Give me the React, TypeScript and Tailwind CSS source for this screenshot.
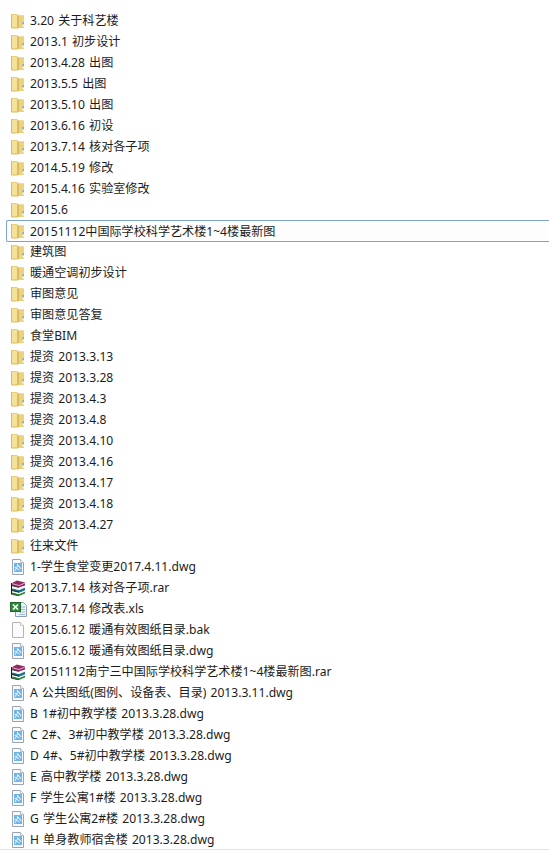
const rows: [string, string][] = [
  ['folder', '3.20 关于科艺楼'],
  ['folder', '2013.1 初步设计'],
  ['folder', '2013.4.28 出图'],
  ['folder', '2013.5.5 出图'],
  ['folder', '2013.5.10 出图'],
  ['folder', '2013.6.16 初设'],
  ['folder', '2013.7.14 核对各子项'],
  ['folder', '2014.5.19 修改'],
  ['folder', '2015.4.16 实验室修改'],
  ['folder', '2015.6'],
  ['folder', '20151112中国际学校科学艺术楼1~4楼最新图'],
  ['folder', '建筑图'],
  ['folder', '暖通空调初步设计'],
  ['folder', '审图意见'],
  ['folder', '审图意见答复'],
  ['folder', '食堂BIM'],
  ['folder', '提资 2013.3.13'],
  ['folder', '提资 2013.3.28'],
  ['folder', '提资 2013.4.3'],
  ['folder', '提资 2013.4.8'],
  ['folder', '提资 2013.4.10'],
  ['folder', '提资 2013.4.16'],
  ['folder', '提资 2013.4.17'],
  ['folder', '提资 2013.4.18'],
  ['folder', '提资 2013.4.27'],
  ['folder', '往来文件'],
  ['dwg', '1-学生食堂变更2017.4.11.dwg'],
  ['rar', '2013.7.14 核对各子项.rar'],
  ['xls', '2013.7.14 修改表.xls'],
  ['blank', '2015.6.12 暖通有效图纸目录.bak'],
  ['dwg', '2015.6.12 暖通有效图纸目录.dwg'],
  ['rar', '20151112南宁三中国际学校科学艺术楼1~4楼最新图.rar'],
  ['dwg', 'A 公共图纸(图例、设备表、目录) 2013.3.11.dwg'],
  ['dwg', 'B 1#初中教学楼 2013.3.28.dwg'],
  ['dwg', 'C 2#、3#初中教学楼 2013.3.28.dwg'],
  ['dwg', 'D 4#、5#初中教学楼 2013.3.28.dwg'],
  ['dwg', 'E 高中教学楼 2013.3.28.dwg'],
  ['dwg', 'F 学生公寓1#楼 2013.3.28.dwg'],
  ['dwg', 'G 学生公寓2#楼 2013.3.28.dwg'],
  ['dwg', 'H 单身教师宿舍楼 2013.3.28.dwg'],
]

function FolderIcon() {
  return (
    <svg width="16" height="16" viewBox="0 0 16 16" className="shrink-0">
      <path d="M1 1h6l1 1.5h6v12.5h-13z" fill="#dcbc62" />
      <path d="M1.5 1.5h6v13.5h-6z" fill="#f5e29a" />
      <path d="M8 2.5l6 .5v12h-6z" fill="#ecd27a" />
      <path d="M7.5 2l1 1v12.5l-1-.5z" fill="#c9a64c" />
      <path d="M1.5 1.5v13.5h6" fill="none" stroke="#d9ba62" strokeWidth="1" />
      <path d="M12.5 9h1.5v2.5h-1.5z" fill="#6fb1e8" />
      <path d="M12.5 11.5h1.5v2h-1.5z" fill="#f7f7f2" />
    </svg>
  )
}

function DwgIcon() {
  return (
    <svg width="16" height="16" viewBox="0 0 16 16" className="shrink-0">
      <path d="M2.5 0.5h8l3 3v12h-11z" fill="#f7f9fc" stroke="#9aa4b0" />
      <path d="M10.5 0.5v3h3" fill="#fff" stroke="#b4bcc6" />
      <rect x="4" y="4" width="8" height="9" fill="#6fb5ea" />
      <path d="M5 12l3-6 3 4M7 5l4 5M4.5 8l5 3" fill="none" stroke="#e4f2fc" strokeWidth="1" />
    </svg>
  )
}

function RarIcon() {
  return (
    <svg width="16" height="16" viewBox="0 0 16 16" className="shrink-0">
      <path d="M1 3.5l6-3 8 2v3L9 7.5 1 5.5z" fill="#8f2a63" />
      <path d="M1.5 3.5l7.5 2 6-2.5" fill="none" stroke="#e0b0cc" />
      <path d="M1 8l8 2 6-2.5v3L9 13 1 11z" fill="#1f7491" />
      <path d="M1 7.5l8 2 6-2.5" fill="none" stroke="#f6f2e2" />
      <path d="M1 12l8 2 6-2.5v2L9 16l-8-2z" fill="#2f8a3c" />
      <path d="M1 11.5l8 2 6-2.5" fill="none" stroke="#f6f2e2" />
      <path d="M1.5 3v11" stroke="#1a1a1a" />
      <path d="M1 5.5l8 2M1 10l8 2M1 14l8 2" stroke="#1a1a1a" strokeWidth="0.7" />
    </svg>
  )
}

function XlsIcon() {
  return (
    <svg width="18" height="16" viewBox="0 0 18 16" className="shrink-0">
      <path d="M5.5 1.5h8l3 3v11h-11z" fill="#eef3fa" stroke="#8a9fba" />
      <path d="M9 6h6M9 8.5h6M9 11h6M9 13.5h6" stroke="#9dbbdd" />
      <rect x="0.5" y="1.5" width="10" height="9" fill="#2e8b3c" stroke="#1f6a2a" />
      <path d="M3 3.5l5 5M8 3.5l-5 5" stroke="#fff" strokeWidth="1.6" />
    </svg>
  )
}

function BlankIcon() {
  return (
    <svg width="16" height="16" viewBox="0 0 16 16" className="shrink-0">
      <path d="M2.5 0.5h8l3 3v12h-11z" fill="#fbfbfb" stroke="#b4b4b4" />
      <path d="M10.5 0.5v3h3" fill="#fff" stroke="#c8c8c8" />
    </svg>
  )
}

function RowIcon({ type }: { type: string }) {
  if (type === 'folder') return <FolderIcon />
  if (type === 'dwg') return <DwgIcon />
  if (type === 'rar') return <RarIcon />
  if (type === 'xls') return <XlsIcon />
  return <BlankIcon />
}

export default function App() {
  return (
    <div className="h-[850px] w-[549px] overflow-hidden border-b border-[#dbe6f2] bg-white pt-[10px] font-['Noto_Sans','Noto_Sans_CJK_SC',sans-serif] text-[12.1px] text-[#1c1c1c] [word-spacing:1px]">
      {rows.map(([type, name], i) =>
        i === 10 ? (
          <div
            key={name}
            className="-mb-px ml-[6px] flex h-[22px] items-center rounded-l-[2px] border border-r-0 border-[#7da2ce] bg-[#fdfdfd] pl-[3px]"
          >
            <span className="flex w-[20px] shrink-0 justify-start">
              <RowIcon type={type} />
            </span>
            <span className="whitespace-nowrap pt-[2px]">{name}</span>
          </div>
        ) : (
          <div key={name} className="ml-[6px] flex h-[21px] items-center pl-[4px]">
            <span className="flex w-[20px] shrink-0 justify-start">
              <RowIcon type={type} />
            </span>
            <span className="whitespace-nowrap pt-[2px]">{name}</span>
          </div>
        ),
      )}
    </div>
  )
}
